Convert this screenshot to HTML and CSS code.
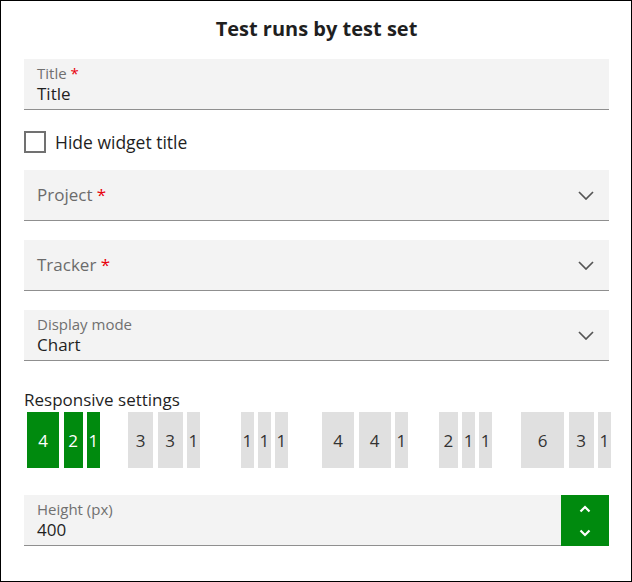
FILE: index.html
```html
<!DOCTYPE html>
<html>
    <head>
        <link rel="stylesheet" href="styles.css">
    </head>
    <body>
        <div class="widget-editor">
            <h2 class="editor-title">Test runs by test set</h2>

            <div class="field">
                <div class="field-body">
                    <div class="field-label">Title <span class="required">*</span></div>
                    <div class="field-value">Title</div>
                </div>
            </div>

            <label class="checkbox-row">
                <span class="checkbox"></span>
                <span class="checkbox-text">Hide widget title</span>
            </label>

            <div class="field field-select">
                <div class="field-body">
                    <div class="field-placeholder">Project <span class="required">*</span></div>
                </div>
                <svg class="chevron" width="16" height="9" viewBox="0 0 16 9">
                    <polyline points="1,1 8,8 15,1" />
                </svg>
            </div>

            <div class="field field-select">
                <div class="field-body">
                    <div class="field-placeholder">Tracker <span class="required">*</span></div>
                </div>
                <svg class="chevron" width="16" height="9" viewBox="0 0 16 9">
                    <polyline points="1,1 8,8 15,1" />
                </svg>
            </div>

            <div class="field field-select">
                <div class="field-body">
                    <div class="field-label">Display mode</div>
                    <div class="field-value">Chart</div>
                </div>
                <svg class="chevron" width="16" height="9" viewBox="0 0 16 9">
                    <polyline points="1,1 8,8 15,1" />
                </svg>
            </div>

            <div class="section-label">Responsive settings</div>
            <div class="layouts">
                <div class="layout active">
                    <span class="col w4">4</span>
                    <span class="col w2">2</span>
                    <span class="col w1">1</span>
                </div>
                <div class="layout">
                    <span class="col w3">3</span>
                    <span class="col w3">3</span>
                    <span class="col w1">1</span>
                </div>
                <div class="layout">
                    <span class="col w1">1</span>
                    <span class="col w1">1</span>
                    <span class="col w1">1</span>
                </div>
                <div class="layout">
                    <span class="col w4">4</span>
                    <span class="col w4">4</span>
                    <span class="col w1">1</span>
                </div>
                <div class="layout">
                    <span class="col w2">2</span>
                    <span class="col w1">1</span>
                    <span class="col w1">1</span>
                </div>
                <div class="layout">
                    <span class="col w6">6</span>
                    <span class="col w3">3</span>
                    <span class="col w1">1</span>
                </div>
            </div>

            <div class="number-field">
                <div class="field">
                    <div class="field-body">
                        <div class="field-label">Height (px)</div>
                        <div class="field-value">400</div>
                    </div>
                </div>
                <div class="spinner">
                    <svg width="12" height="8" viewBox="0 0 12 8">
                        <polyline points="1.5,6.5 6,2 10.5,6.5" />
                    </svg>
                    <svg width="12" height="8" viewBox="0 0 12 8">
                        <polyline points="1.5,1.5 6,6 10.5,1.5" />
                    </svg>
                </div>
            </div>
        </div>
    </body>
</html>
```

FILE: styles.css
```css
* {
    margin: 0;
    padding: 0;
    box-sizing: border-box;
}

body {
    font-family: 'Open Sans', 'Noto Sans', sans-serif;
    color: #1f1f1f;
    background: #fff;
}

.widget-editor {
    height: 582px;
    border: 1px solid #000;
    padding: 0 22px 0 23px;
}

.editor-title {
    text-align: center;
    font-size: 20px;
    font-weight: 700;
    line-height: 28px;
    padding-top: 14px;
    margin-bottom: 16px;
    color: #1f1f1f;
}

.field {
    display: flex;
    align-items: center;
    height: 51px;
    background: #f3f3f3;
    border-bottom: 1px solid #8f8f8f;
    padding: 0 13px;
}

.field-body {
    flex: 1;
}

.field-label {
    font-size: 15px;
    line-height: 18px;
    color: #707070;
}

.field-value {
    font-size: 17px;
    line-height: 23px;
    color: #1f1f1f;
}

.field-placeholder {
    font-size: 17px;
    line-height: 24px;
    color: #6b6b6b;
}

.required {
    color: #e8000b;
}

.field-select {
    margin-bottom: 19px;
}

.chevron {
    margin-right: 2px;
    fill: none;
    stroke: #555;
    stroke-width: 1.7;
}

.checkbox-row {
    display: flex;
    align-items: center;
    gap: 9px;
    margin: 20px 0 17px;
    height: 23px;
}

.checkbox {
    width: 22px;
    height: 22px;
    border: 2px solid #717171;
    background: #fff;
}

.checkbox-text {
    font-size: 17.5px;
    color: #1f1f1f;
}

.section-label {
    font-size: 17px;
    line-height: 24px;
    margin-top: 27px;
}

.layouts {
    display: flex;
    margin: 0 -7px 27px -11px;
}

.layout {
    flex: 1;
    display: flex;
    justify-content: center;
    gap: 4.5px;
}

.col {
    height: 56px;
    background: #e0e0e0;
    color: #333;
    font-size: 17px;
    display: flex;
    align-items: center;
    justify-content: center;
}

.layout.active .col {
    background: #008a0e;
    color: #fff;
}

.w1 { width: 12.5px; }
.w2 { width: 19px; }
.w3 { width: 25px; }
.w4 { width: 32px; }
.w6 { width: 43px; }

.number-field {
    display: flex;
}

.number-field .field {
    flex: 1;
}

.spinner {
    width: 48px;
    height: 51px;
    background: #008a0e;
    display: flex;
    flex-direction: column;
    align-items: center;
    justify-content: center;
    gap: 16px;
}

.spinner svg {
    fill: none;
    stroke: #fff;
    stroke-width: 2.2;
}
```
